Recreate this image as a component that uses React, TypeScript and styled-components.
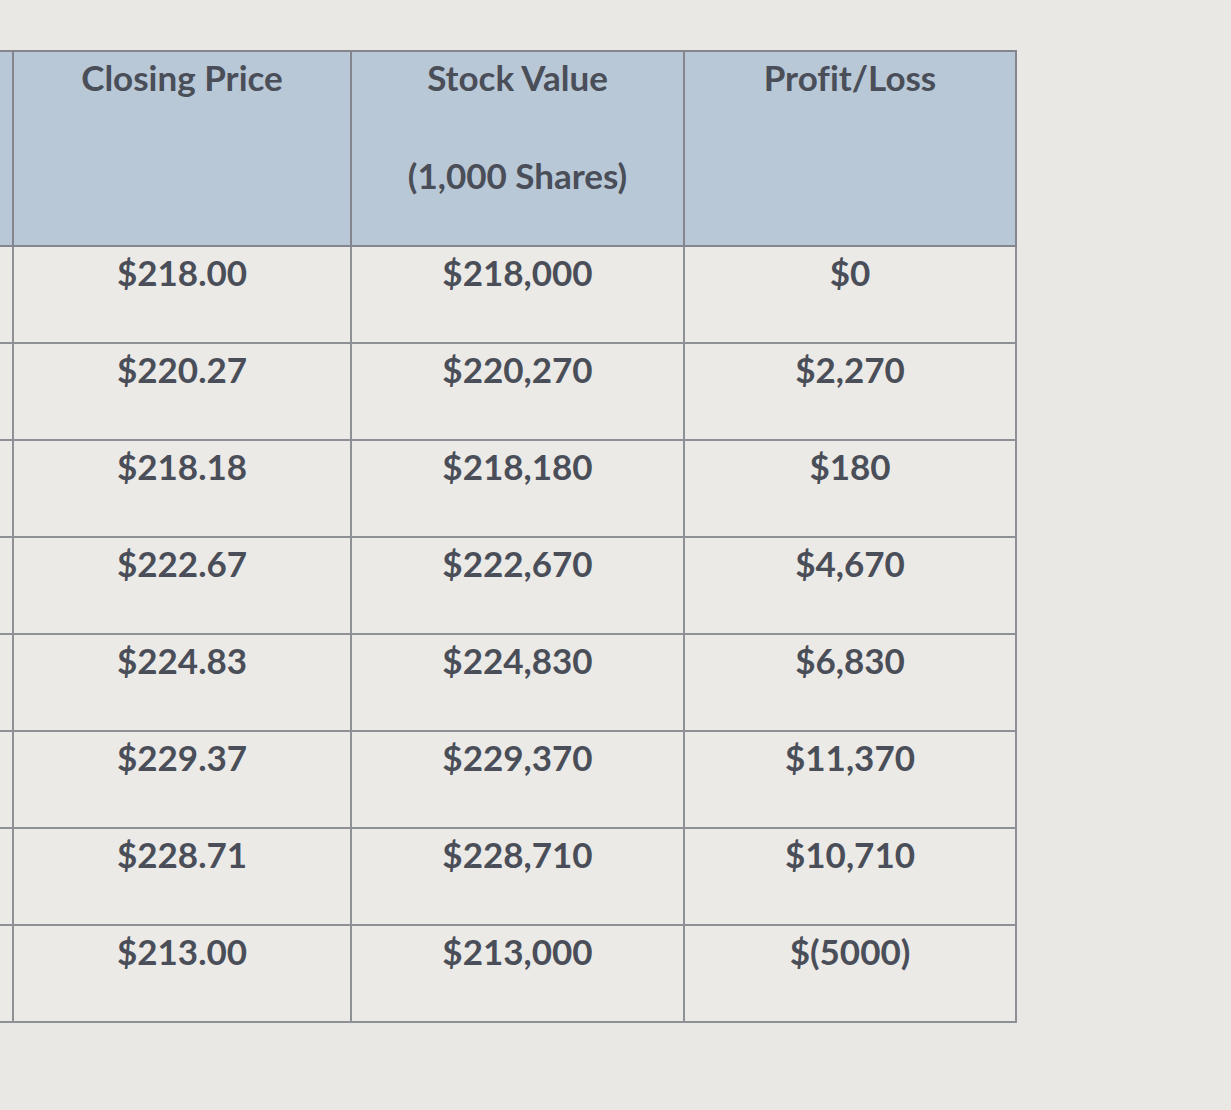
import React from "react"
import styled, { createGlobalStyle } from "styled-components"

const GlobalStyle = createGlobalStyle`
    html, body {
        margin: 0;
        padding: 0;
        background-color: #e9e8e5;
        overflow: hidden;
    }
`

interface IRow {
    price: string;
    value: string;
    profit: string;
}

const rows: IRow[] = [
    { price: "$218.00", value: "$218,000", profit: "$0" },
    { price: "$220.27", value: "$220,270", profit: "$2,270" },
    { price: "$218.18", value: "$218,180", profit: "$180" },
    { price: "$222.67", value: "$222,670", profit: "$4,670" },
    { price: "$224.83", value: "$224,830", profit: "$6,830" },
    { price: "$229.37", value: "$229,370", profit: "$11,370" },
    { price: "$228.71", value: "$228,710", profit: "$10,710" },
    { price: "$213.00", value: "$213,000", profit: "$(5000)" },
]

export default function App() {
    return (
        <Page>
            <GlobalStyle />
            <Table>
                <colgroup>
                    <col style={{ width: 200 }} />
                    <col style={{ width: 338 }} />
                    <col style={{ width: 333 }} />
                    <col style={{ width: 332 }} />
                </colgroup>
                <thead>
                    <tr>
                        <HeadCell />
                        <HeadCell>Closing Price</HeadCell>
                        <HeadCell>Stock Value<br /><br />(1,000 Shares)</HeadCell>
                        <HeadCell>Profit/Loss</HeadCell>
                    </tr>
                </thead>
                <tbody>
                    {rows.map((row, index) =>
                        <tr key={index}>
                            <Cell />
                            <Cell>{row.price}</Cell>
                            <Cell>{row.value}</Cell>
                            <Cell>{row.profit}</Cell>
                        </tr>
                    )}
                </tbody>
            </Table>
        </Page>
    )
}

const Page = styled.div`
    width: 1231px;
    height: 1110px;
    padding-top: 50px;
    box-sizing: border-box;
    background-color: #e9e8e5;
    font-family: Lato, "Open Sans", sans-serif;
    font-weight: 700;
    font-variant-ligatures: none;
    color: #4a4e58;
`

const Table = styled.table`
    border-collapse: collapse;
    margin-left: -188px;
    table-layout: fixed;
`

const HeadCell = styled.th`
    height: 195px;
    box-sizing: border-box;
    padding: 1px 0 0;
    vertical-align: top;
    text-align: center;
    font-size: 35px;
    line-height: 49px;
    font-weight: 700;
    background-color: #b9c8d6;
    border: 2px solid #83878d;
`

const Cell = styled.td`
    height: 97px;
    box-sizing: border-box;
    padding: 1px 0 0;
    vertical-align: top;
    text-align: center;
    font-size: 35px;
    line-height: 49px;
    background-color: #ebeae7;
    border: 2px solid #8d9094;
`
